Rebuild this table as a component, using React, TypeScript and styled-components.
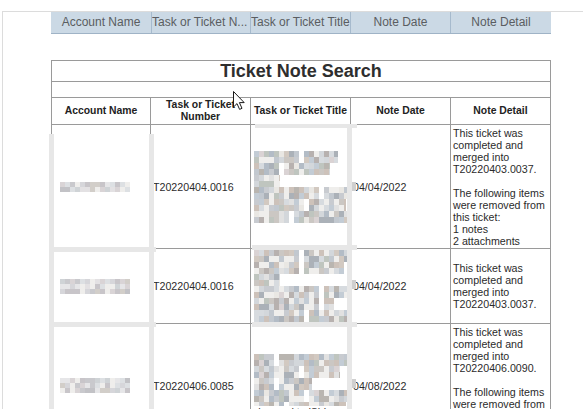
import React from "react";
import styled, { createGlobalStyle } from "styled-components";

const Global = createGlobalStyle`
  html, body { margin: 0; padding: 0; background: #ffffff; }
  body { font-family: "Liberation Sans", Arial, sans-serif; }
`;

const Page = styled.div`
  position: relative;
  width: 583px;
  height: 409px;
  overflow: hidden;
  padding-top: 11px;
  box-sizing: border-box;
`;

const Frame = styled.div`
  margin-left: 2px;
  border-top: 1px solid #dcdcdc;
  border-left: 1px solid #dcdcdc;
  padding-left: 48px;
  height: 100%;
  box-sizing: border-box;
`;

const HeaderBar = styled.div`
  display: grid;
  grid-template-columns: 100px 99px 100px 100px 101px;
  width: 500px;
  height: 21px;
  background: #cbd9e5;
  border-bottom: 1px solid #9fb3c6;
`;

const BarCell = styled.div<{ $first?: boolean; $left?: boolean }>`
  border-left: ${(p) => (p.$first ? "none" : "1px solid #a6bacd")};
  font-size: 12px;
  line-height: 21px;
  color: #5a5d61;
  text-align: ${(p) => (p.$left ? "left" : "center")};
  white-space: nowrap;
  overflow: hidden;
`;

const ReportTable = styled.table`
  margin-top: 26px;
  width: 500px;
  border-collapse: collapse;
  table-layout: fixed;
  color: #2b2b2b;
`;

const Cell = styled.td`
  border: 1px solid #9a9a9a;
  padding: 1px 2px;
  font-size: 10.67px;
  line-height: 12px;
  vertical-align: middle;
  overflow: hidden;
`;

const TitleCell = styled(Cell)`
  height: 20px;
  padding: 0;
  font-size: 18px;
  line-height: 20px;
  font-weight: bold;
  text-align: center;
  color: #2e2e2e;
`;

const SpacerCell = styled(Cell)`
  height: 15px;
  padding: 0;
`;

const HeadCell = styled(Cell)`
  height: 23px;
  padding: 1px;
  font-size: 10.4px;
  font-weight: bold;
  text-align: center;
  color: #222;
`;

const DataRow = styled.tr<{ $h: number }>`
  height: ${(p) => p.$h}px;
`;

const ClipLine = styled.div`
  white-space: nowrap;
  overflow: hidden;
  color: #333;
`;

const MosaicSvg = styled.svg`
  display: block;
  margin-left: 1px;
`;

const Strip = styled.div<{ $x: number; $y: number; $w: number; $h: number; $c?: string }>`
  position: absolute;
  left: ${(p) => p.$x}px;
  top: ${(p) => p.$y}px;
  width: ${(p) => p.$w}px;
  height: ${(p) => p.$h}px;
  background: ${(p) => p.$c || "#e7e7e7"};
`;

const CursorSvg = styled.svg`
  position: absolute;
  left: 232px;
  top: 90px;
`;

const palettes: Record<string, string[]> = {
  title: [
    "#b9b5b0", "#cbc7c3", "#b3bcc6", "#d7dbdf", "#c2c8cf", "#cdc2ba",
    "#e1e1e1", "#abb1b8", "#dad3d4", "#bfc5bf", "#e9e7e3", "#c8cbd0",
    "#b7b1af", "#d3d7db", "#d2c9c1", "#c3ccd5",
  ],
  account: [
    "#d6d6da", "#c9c9cd", "#e3e1e3", "#c2c2c6", "#d2cec9", "#dde0e3",
    "#cfd3d6", "#c8c5c9", "#e6e6e8", "#d9d4d6",
  ],
};

function hash(n: number): number {
  let x = Math.imul(n | 0, 0x9e3779b1) >>> 0;
  x ^= x >>> 13;
  x = Math.imul(x, 0x85ebca6b) >>> 0;
  x ^= x >>> 16;
  return x >>> 0;
}

type MosaicProps = {
  lines: number[];
  seed: number;
  tone: "title" | "account";
  lineHeight: number;
  rowsPerLine: number;
  cellW?: number;
  crop?: number;
};

const Mosaic: React.FC<MosaicProps> = ({ lines, seed, tone, lineHeight, rowsPerLine, cellW = 5, crop }) => {
  const pal = palettes[tone];
  const cellH = lineHeight / rowsPerLine;
  const width = Math.max(...lines);
  const height = crop ?? lines.length * lineHeight;
  const rects: React.ReactNode[] = [];
  lines.forEach((w, li) => {
    const gapAt = tone === "title" ? 20 + (hash(seed * 31 + li) % 50) : -1;
    for (let r = 0; r < rowsPerLine; r++) {
      for (let x = 0; x < w; x += cellW) {
        if (x === gapAt - (gapAt % cellW)) continue;
        const h = hash(seed * 7919 + li * 131 + r * 17 + x);
        const color = h % 6 === 0 ? "#efeeec" : pal[h % pal.length];
        rects.push(
          <rect
            key={`${li}-${r}-${x}`}
            x={x}
            y={li * lineHeight + r * cellH}
            width={Math.min(cellW, w - x)}
            height={cellH}
            fill={color}
          />
        );
      }
    }
  });
  return (
    <MosaicSvg width={width} height={height} viewBox={`0 0 ${width} ${height}`}>
      {rects}
    </MosaicSvg>
  );
};

type Row = {
  id: string;
  date: string;
  height: number;
  account: number[];
  title: number[];
  titleCrop?: number;
  titleTail?: string;
  note: string[];
};

const fullNote = (merged: string) => [
  "This ticket was completed and merged into " + merged,
  "",
  "The following items were removed from this ticket:",
  "1 notes",
  "2 attachments",
];

const rows: Row[] = [
  {
    id: "T20220404.0016",
    date: "04/04/2022",
    height: 124,
    account: [75, 75],
    title: [84, 76, 26, 98, 92, 98],
    note: fullNote("T20220403.0037."),
  },
  {
    id: "T20220404.0016",
    date: "04/04/2022",
    height: 74,
    account: [75, 75, 75],
    title: [98, 90, 26, 98, 80, 98],
    note: ["This ticket was completed and merged into T20220403.0037."],
  },
  {
    id: "T20220406.0085",
    date: "04/08/2022",
    height: 124,
    account: [75, 75, 75],
    title: [98, 86, 58, 98, 92],
    titleCrop: 52,
    titleTail: "changed to 'Shipped'",
    note: fullNote("T20220406.0090."),
  },
];

const NoteText: React.FC<{ parts: string[] }> = ({ parts }) => (
  <>
    {parts.map((p, i) => (
      <React.Fragment key={i}>
        {i > 0 && <br />}
        {p}
      </React.Fragment>
    ))}
  </>
);

const strips = [
  { x: 49, y: 134, w: 5, h: 280 },
  { x: 149, y: 134, w: 5, h: 280 },
  { x: 49, y: 247, w: 107, h: 5 },
  { x: 49, y: 322, w: 107, h: 5 },
  { x: 255, y: 124, w: 102, h: 4 },
  { x: 347, y: 124, w: 5, h: 290 },
  { x: 252, y: 245, w: 105, h: 5 },
  { x: 252, y: 322, w: 105, h: 5 },
  { x: 352, y: 182, w: 4, h: 9, c: "#cfcfcf" },
  { x: 352, y: 280, w: 4, h: 9, c: "#cfcfcf" },
  { x: 352, y: 379, w: 4, h: 9, c: "#cfcfcf" },
];

export default function App() {
  return (
    <>
      <Global />
      <Page>
        <Frame>
          <HeaderBar>
            <BarCell $first>Account Name</BarCell>
            <BarCell $left>Task or Ticket N...</BarCell>
            <BarCell $left>Task or Ticket Title</BarCell>
            <BarCell>Note Date</BarCell>
            <BarCell>Note Detail</BarCell>
          </HeaderBar>
          <ReportTable>
            <colgroup>
              <col style={{ width: 99 }} />
              <col style={{ width: 100 }} />
              <col style={{ width: 100 }} />
              <col style={{ width: 100 }} />
              <col style={{ width: 100 }} />
            </colgroup>
            <tbody>
              <tr>
                <TitleCell colSpan={5}>Ticket Note Search</TitleCell>
              </tr>
              <tr>
                <SpacerCell colSpan={5} />
              </tr>
              <tr>
                <HeadCell>Account Name</HeadCell>
                <HeadCell>Task or Ticket Number</HeadCell>
                <HeadCell>Task or Ticket Title</HeadCell>
                <HeadCell>Note Date</HeadCell>
                <HeadCell>Note Detail</HeadCell>
              </tr>
              {rows.map((r, i) => (
                <DataRow key={i} $h={r.height}>
                  <Cell>
                    <Mosaic lines={r.account} seed={i + 1} tone="account" lineHeight={5} rowsPerLine={1} />
                  </Cell>
                  <Cell>{r.id}</Cell>
                  <Cell>
                    <Mosaic
                      lines={r.title}
                      seed={i + 11}
                      tone="title"
                      lineHeight={12}
                      rowsPerLine={2}
                      crop={r.titleCrop}
                    />
                    {r.titleTail && <ClipLine>{r.titleTail}</ClipLine>}
                  </Cell>
                  <Cell>{r.date}</Cell>
                  <Cell>
                    <NoteText parts={r.note} />
                  </Cell>
                </DataRow>
              ))}
            </tbody>
          </ReportTable>
        </Frame>
        {strips.map((s, i) => (
          <Strip key={i} $x={s.x} $y={s.y} $w={s.w} $h={s.h} $c={s.c} />
        ))}
        <CursorSvg width="14" height="21" viewBox="0 0 14 21">
          <path
            d="M1.5 1.5 L1.5 17 L5 13.6 L7.6 19.4 L10 18.3 L7.4 12.6 L12.2 12.6 Z"
            fill="#ffffff"
            stroke="#1a1a1a"
            strokeWidth="1"
            strokeLinejoin="miter"
          />
        </CursorSvg>
      </Page>
    </>
  );
}
